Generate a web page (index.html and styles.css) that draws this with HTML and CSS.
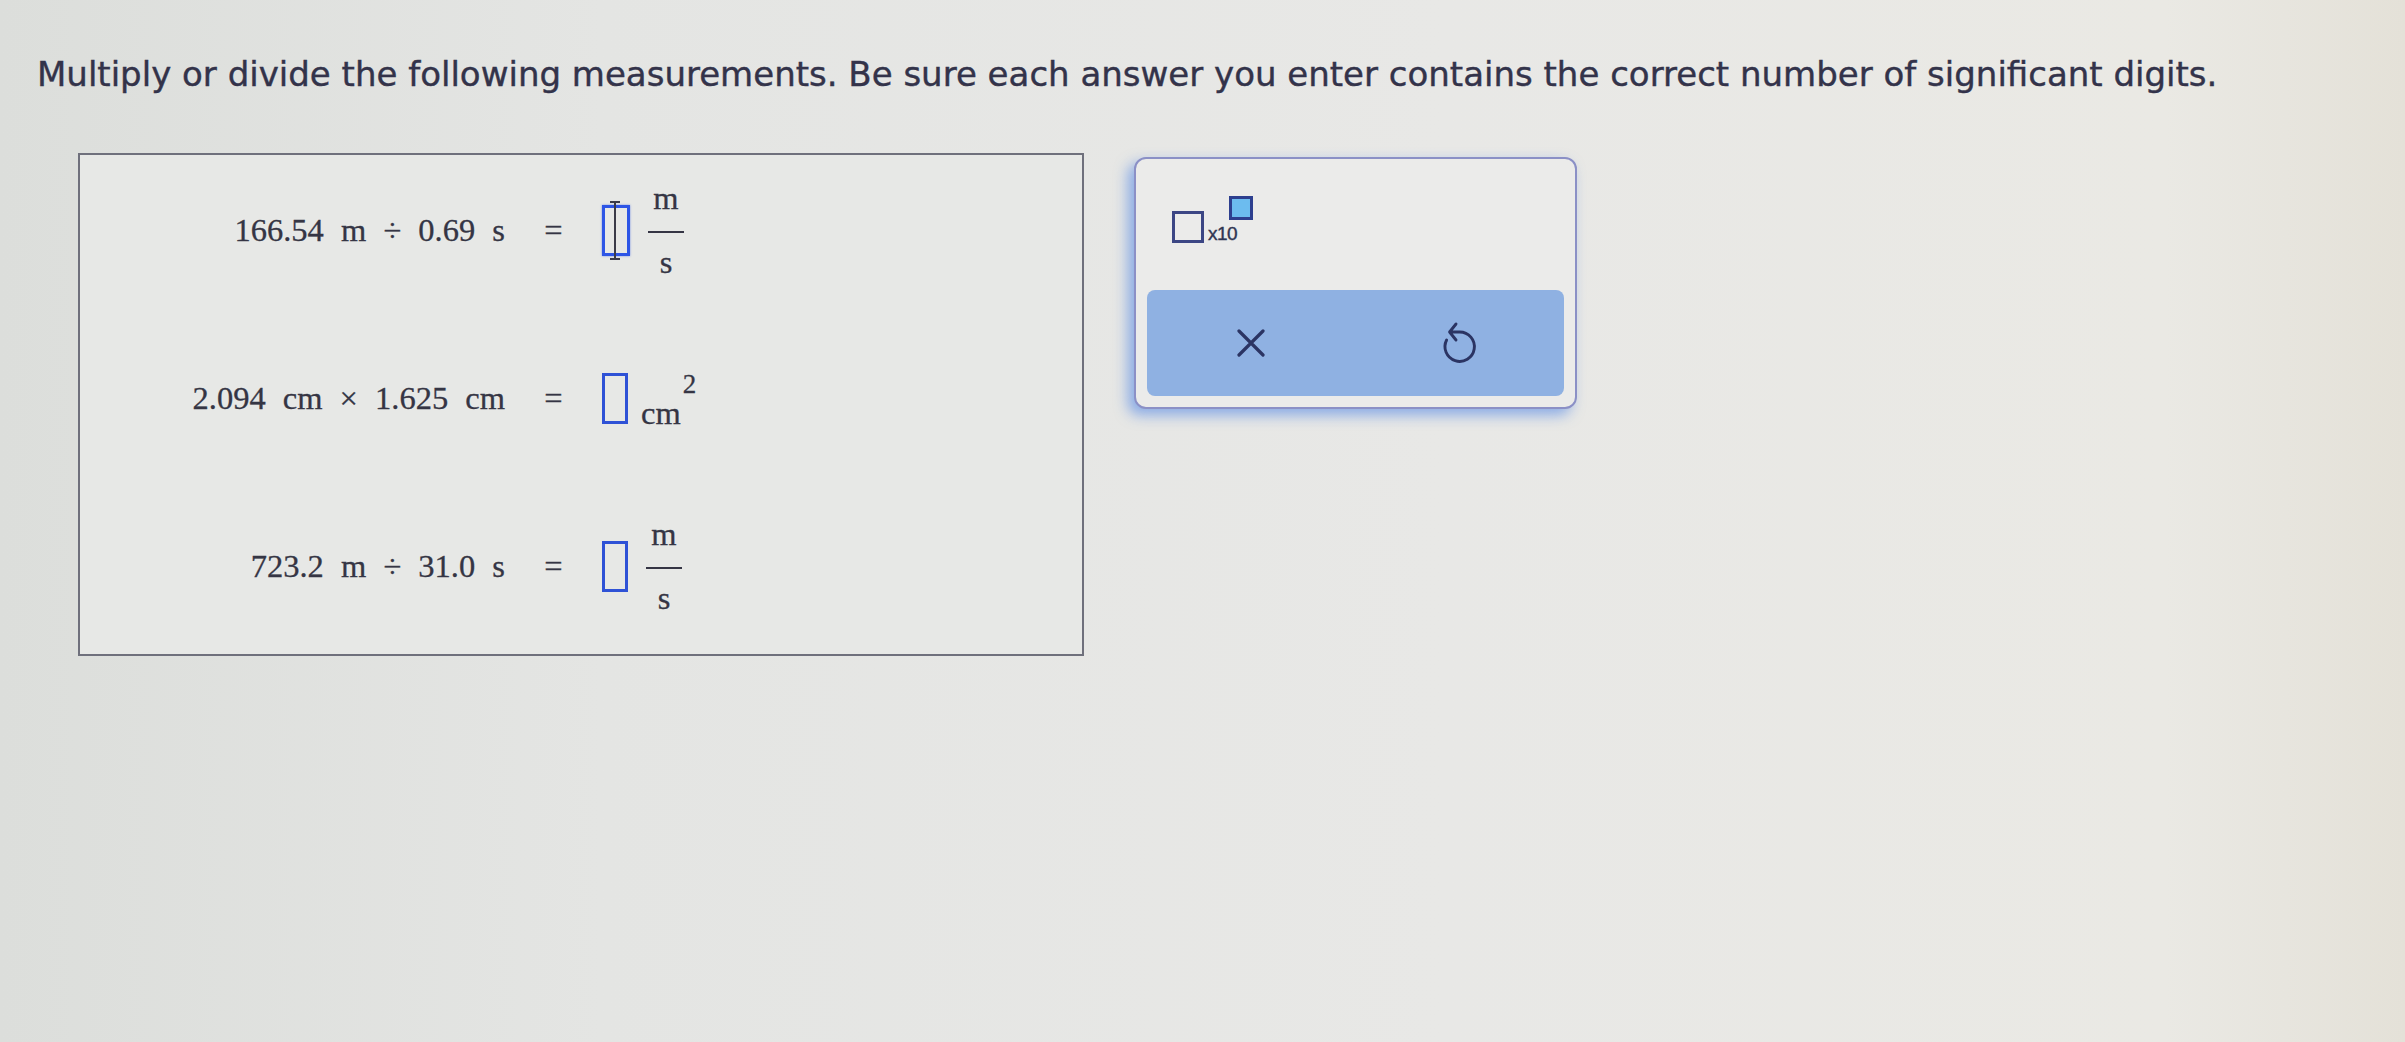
FILE: index.html
```html
<!DOCTYPE html>
<html lang="en">
<head>
<meta charset="utf-8">
<title>Significant digits</title>
<link rel="stylesheet" href="styles.css">
</head>
<body>
<p class="prompt">Multiply or divide the following measurements. Be sure each answer you enter contains the correct number of significant digits.</p>
<div class="content">
  <div class="question">
    <div class="expr">166.54 m ÷ 0.69 s</div>
    <div class="eq">=</div>
    <div class="answer">
      <span class="box focused"><span class="cursor"></span></span>
      <span class="frac"><span class="num">m</span><span class="bar"></span><span class="den">s</span></span>
    </div>

    <div class="expr">2.094 cm × 1.625 cm</div>
    <div class="eq">=</div>
    <div class="answer">
      <span class="box"></span>
      <span class="unit">cm<sup>2</sup></span>
    </div>

    <div class="expr">723.2 m ÷ 31.0 s</div>
    <div class="eq">=</div>
    <div class="answer">
      <span class="box"></span>
      <span class="frac"><span class="num">m</span><span class="bar"></span><span class="den">s</span></span>
    </div>
  </div>

  <div class="panel">
    <div class="sci">
      <span class="sci-base"></span>
      <span class="sci-x">x10</span>
      <span class="sci-exp"></span>
    </div>
    <div class="actions">
      <div class="action">
        <svg width="28" height="28" viewBox="0 0 28 28" aria-hidden="true"><path d="M2 2 L26 26 M26 2 L2 26" fill="none" stroke="#2b3463" stroke-width="3.2" stroke-linecap="round"/></svg>
      </div>
      <div class="action">
        <svg width="42" height="52" viewBox="18 14 42 52" aria-hidden="true"><path d="M38.7 29 A14.7 14.7 0 1 1 25.6 37 M38.7 29 L28.6 29 M35 21 L28.6 29 L35 37" fill="none" stroke="#2b3463" stroke-width="2.9" stroke-linecap="round" stroke-linejoin="round"/></svg>
      </div>
    </div>
  </div>
</div>
</body>
</html>
```

FILE: styles.css
```css
html, body {
  margin: 0;
  padding: 0;
}

body {
  width: 2405px;
  height: 1042px;
  overflow: hidden;
  background: linear-gradient(90deg, #dcdedb 0%, #e4e5e3 25%, #e8e8e6 60%, #eae9e4 90%, #e4e1d8 100%);
  font-family: "DejaVu Sans", Verdana, sans-serif;
  color: #3b3b4c;
}

.prompt {
  margin: 0;
  padding: 54px 0 0 37px;
  font-size: 34px;
  line-height: 40px;
  color: #33334a;
  -webkit-text-stroke: 0.4px #33334a;
}

.content {
  display: flex;
  align-items: flex-start;
  gap: 50px;
  padding: 59px 0 0 78px;
}

.question {
  box-sizing: border-box;
  width: 1006px;
  height: 503px;
  border: 2px solid #6f707c;
  background: #e7e8e6;
  display: grid;
  grid-template-columns: 425px 95px 1fr;
  grid-auto-rows: 110px;
  row-gap: 58px;
  align-items: center;
  padding-top: 20px;
  font-family: "Liberation Serif", "Times New Roman", serif;
  font-size: 32.5px;
  color: #353544;
  -webkit-text-stroke: 0.3px #353544;
}

.expr {
  text-align: right;
  word-spacing: 9px;
  white-space: nowrap;
  line-height: 36px;
}

.eq {
  text-align: center;
  padding-left: 2px;
  line-height: 36px;
}

.answer {
  display: flex;
  align-items: center;
}

.box {
  position: relative;
  box-sizing: border-box;
  display: block;
  width: 26px;
  height: 51px;
  margin-left: 2px;
  border: 3px solid #2f52d6;
}

.box.focused {
  width: 28px;
  border-color: #2d55e6;
  box-shadow: 0 0 2px rgba(45, 85, 230, 0.6);
}

.cursor {
  position: absolute;
  left: 9px;
  top: -7px;
  bottom: -7px;
  width: 2px;
  background: #3b3b48;
}

.cursor::before,
.cursor::after {
  content: "";
  position: absolute;
  left: -4px;
  width: 10px;
  height: 2px;
  background: #3b3b48;
}

.cursor::before { top: 0; }
.cursor::after { bottom: 0; }

.frac {
  display: flex;
  flex-direction: column;
  align-items: center;
  margin-left: 18px;
  width: 36px;
}

.num,
.den {
  line-height: 36px;
}

.frac .bar {
  display: block;
  width: 36px;
  height: 2px;
  background: #353544;
  margin: 15px 0 11px;
}

.unit {
  margin-left: 13px;
  line-height: 36px;
  height: 36px;
  margin-top: 8px;
}

.unit sup {
  font-size: 27px;
  line-height: 0;
  vertical-align: 31px;
  margin-left: 2px;
}

.panel {
  box-sizing: border-box;
  width: 443px;
  height: 252px;
  margin-top: 4px;
  border: 2px solid #8b90c6;
  border-radius: 12px;
  background: #ebebea;
  box-shadow: -6px 6px 14px rgba(60, 120, 230, 0.55);
  padding: 0 11px 11px;
  display: flex;
  flex-direction: column;
}

.sci {
  height: 131px;
  box-sizing: border-box;
  padding: 37px 0 0 25px;
  display: flex;
  align-items: flex-start;
}

.sci-base {
  box-sizing: border-box;
  width: 32px;
  height: 32px;
  margin-top: 15px;
  border: 3px solid #3c4684;
}

.sci-x {
  font-family: "Liberation Sans", Arial, sans-serif;
  font-size: 19px;
  line-height: 19px;
  margin: 28px 0 0 4px;
  color: #2f3552;
  letter-spacing: -0.5px;
  -webkit-text-stroke: 0.4px #2f3552;
}

.sci-exp {
  box-sizing: border-box;
  width: 24px;
  height: 24px;
  margin-left: -8px;
  border: 3px solid #2d3f8f;
  background: #6cbcef;
}

.actions {
  flex: 1;
  display: flex;
  background: #8fb1e2;
  border-radius: 8px;
}

.action {
  flex: 1;
  display: flex;
  align-items: center;
  justify-content: center;
}
```
